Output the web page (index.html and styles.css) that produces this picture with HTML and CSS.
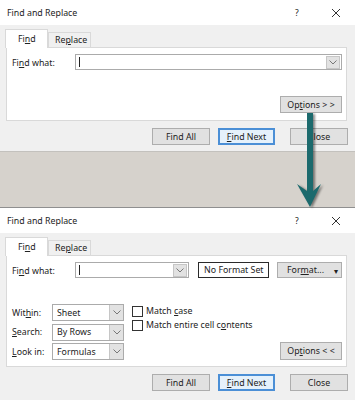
FILE: index.html
```html
<!DOCTYPE html>
<html>
<head>
<meta charset="utf-8">
<link rel="stylesheet" href="styles.css">
</head>
<body>
<div class="dialog dialog-top">
  <div class="titlebar">
    <span class="title">Find and Replace</span>
    <span class="help">?</span>
    <svg class="xicon" width="10" height="10" viewBox="0 0 10 10"><path d="M1 1 L9 9 M9 1 L1 9" stroke="#333" stroke-width="1" fill="none"/></svg>
  </div>
  <div class="tabs">
    <div class="tab active">Fi<u>n</u>d</div>
    <div class="tab">Re<u>p</u>lace</div>
  </div>
  <div class="panel panel-short">
    <div class="find-row">
      <span class="label">Fi<u>n</u>d what:</span>
      <div class="combo combo-wide">
        <span class="caret"></span>
        <span class="dd"><svg width="8" height="5" viewBox="0 0 8 5"><path d="M0.5 0.5 L4 4 L7.5 0.5" stroke="#777" fill="none"/></svg></span>
      </div>
    </div>
    <div class="opt-wrap">
      <div class="btn btn-options">Op<u>t</u>ions &gt; &gt;</div>
    </div>
  </div>
  <div class="actions">
    <div class="btn btn-act">Find All</div>
    <div class="btn btn-act primary"><u>F</u>ind Next</div>
    <div class="btn btn-act btn-closebtn">Close</div>
  </div>
</div>
<div class="gap"></div>
<div class="dialog dialog-bottom">
  <div class="titlebar">
    <span class="title">Find and Replace</span>
    <span class="help">?</span>
    <svg class="xicon" width="10" height="10" viewBox="0 0 10 10"><path d="M1 1 L9 9 M9 1 L1 9" stroke="#333" stroke-width="1" fill="none"/></svg>
  </div>
  <div class="tabs">
    <div class="tab active">Fi<u>n</u>d</div>
    <div class="tab">Re<u>p</u>lace</div>
  </div>
  <div class="panel panel-tall">
    <div class="find-row">
      <span class="label">Fi<u>n</u>d what:</span>
      <div class="combo combo-narrow">
        <span class="caret"></span>
        <span class="dd"><svg width="8" height="5" viewBox="0 0 8 5"><path d="M0.5 0.5 L4 4 L7.5 0.5" stroke="#777" fill="none"/></svg></span>
      </div>
      <div class="noformat">No Format Set</div>
      <div class="btn btn-format"><span>For<u>m</u>at...</span><span class="tri">▾</span></div>
    </div>
    <div class="opts">
      <div class="selgrid">
        <span class="slabel">Wit<u>h</u>in:</span>
        <div class="select"><span>Sheet</span><span class="sdd"><svg width="8" height="5" viewBox="0 0 8 5"><path d="M0.5 0.5 L4 4 L7.5 0.5" stroke="#777" fill="none"/></svg></span></div>
        <span class="slabel"><u>S</u>earch:</span>
        <div class="select"><span>By Rows</span><span class="sdd"><svg width="8" height="5" viewBox="0 0 8 5"><path d="M0.5 0.5 L4 4 L7.5 0.5" stroke="#777" fill="none"/></svg></span></div>
        <span class="slabel"><u>L</u>ook in:</span>
        <div class="select"><span>Formulas</span><span class="sdd"><svg width="8" height="5" viewBox="0 0 8 5"><path d="M0.5 0.5 L4 4 L7.5 0.5" stroke="#777" fill="none"/></svg></span></div>
      </div>
      <div class="checks">
        <div class="check"><span class="box"></span><span>Match <u>c</u>ase</span></div>
        <div class="check"><span class="box"></span><span>Match entire cell c<u>o</u>ntents</span></div>
      </div>
      <div class="btn btn-options btn-less">Op<u>t</u>ions &lt; &lt;</div>
    </div>
  </div>
  <div class="actions">
    <div class="btn btn-act">Find All</div>
    <div class="btn btn-act primary"><u>F</u>ind Next</div>
    <div class="btn btn-act btn-closebtn">Close</div>
  </div>
</div>
<svg class="arrow" width="30" height="100" viewBox="0 0 30 100">
  <rect x="11" y="3" width="6" height="80" fill="#1c6a6d"/>
  <path d="M1 74 L11 81 L17 81 L25 74 L14 97 Z" fill="#1c6a6d"/>
</svg>
</body>
</html>
```
FILE: styles.css
```css
* { box-sizing: border-box; }
body {
  margin: 0;
  width: 355px;
  height: 400px;
  overflow: hidden;
  position: relative;
  background: #d6d2cc;
  font-family: "Noto Sans", "Open Sans", sans-serif;
  font-size: 8.8px;
  color: #222;
}
u { text-decoration-thickness: 1px; text-underline-offset: 1px; }
.dialog { background: #f0f0f0; }
.dialog-top { height: 152px; border-bottom: 1px solid #c3c1bd; }
.gap { height: 55px; }
.dialog-bottom { height: 193px; border-top: 1px solid #8f8f8f; }
.titlebar {
  height: 25px;
  background: #fff;
  display: flex;
  align-items: center;
  padding-left: 7px;
}
.title { flex: 1; padding-top: 1px; }
.help { width: 10px; font-size: 8.5px; margin-right: 26px; }
.xicon { margin-right: 14px; }
.tabs {
  margin-top: 4px;
  height: 18px;
  padding-left: 5px;
  display: flex;
  align-items: flex-end;
}
.tab {
  width: 43px;
  height: 15px;
  border: 1px solid #d9d9d9;
  border-bottom: none;
  background: #f0f0f0;
  display: flex;
  align-items: center;
  padding-left: 6px;
}
.tab.active {
  height: 19px;
  background: #fff;
  margin-bottom: -1px;
  position: relative;
  z-index: 1;
  padding-left: 12px;
  padding-bottom: 1px;
}
.panel {
  margin: 0 8px 0 6px;
  border: 1px solid #d9d9d9;
  background: #fff;
  padding: 6px 4px 0 5px;
}
.panel-short { height: 74px; }
.panel-tall { height: 112px; }
.find-row { display: flex; align-items: center; height: 16px; }
.label { width: 63px; padding-top: 1px; }
.combo {
  height: 16px;
  border: 1px solid #ababab;
  background: #fff;
  position: relative;
  display: flex;
  align-items: center;
  justify-content: space-between;
  padding: 0 1px 0 3px;
}
.combo-wide { flex: 1; }
.combo-narrow { width: 115px; }
.caret { width: 1px; height: 10px; background: #222; }
.dd {
  width: 14px;
  height: 13px;
  background: #e2e2e2;
  border: 1px solid #c6c6c6;
  display: flex;
  align-items: center;
  justify-content: center;
}
.opt-wrap { display: flex; justify-content: flex-end; margin-top: 26px; }
.btn {
  height: 17px;
  background: #e1e1e1;
  border: 1px solid #adadad;
  display: flex;
  align-items: center;
  justify-content: center;
}
.btn-options { width: 62px; }
.actions {
  display: flex;
  justify-content: flex-end;
  padding-right: 7px;
  margin-top: 7px;
  gap: 8px;
}
.btn-act { width: 58px; }
.primary { border: 2px solid #4b8fd6; background: #e5f1fb; width: 57px; }
.btn-closebtn { margin-left: 7px; }
.noformat {
  width: 71px;
  height: 16px;
  margin-left: 9px;
  border: 1px solid #2a2a2a;
  background: #fff;
  display: flex;
  align-items: center;
  justify-content: center;
}
.btn-format {
  width: 65px;
  height: 16px;
  margin-left: 8px;
  justify-content: flex-end;
  padding-right: 3px;
}
.btn-format .tri { font-size: 8px; margin-left: 10px; }
.opts {
  display: flex;
  align-items: flex-start;
  margin-top: 26px;
}
.selgrid {
  display: grid;
  grid-template-columns: 40px 72px;
  grid-auto-rows: 17px;
  row-gap: 2.5px;
  align-items: center;
}
.select {
  height: 17px;
  border: 1px solid #ababab;
  background: #fff;
  display: flex;
  align-items: stretch;
  justify-content: space-between;
  padding-left: 4px;
}
.select span:first-child { display: flex; align-items: center; }
.sdd {
  width: 14px;
  background: #e2e2e2;
  border-left: 1px solid #c6c6c6;
  display: flex;
  align-items: center;
  justify-content: center;
}
.checks {
  margin-left: 8px;
  padding-top: 1px;
  display: flex;
  flex-direction: column;
  gap: 2px;
}
.check { display: flex; align-items: center; height: 12px; }
.box {
  width: 11px;
  height: 11px;
  border: 1px solid #333;
  background: #fff;
  margin-right: 3px;
}
.btn-less { margin-left: auto; margin-top: 38px; height: 18px; }
.arrow {
  position: absolute;
  left: 296px;
  top: 110px;
  filter: drop-shadow(2px 1px 1px rgba(0,0,0,0.45));
}
```
